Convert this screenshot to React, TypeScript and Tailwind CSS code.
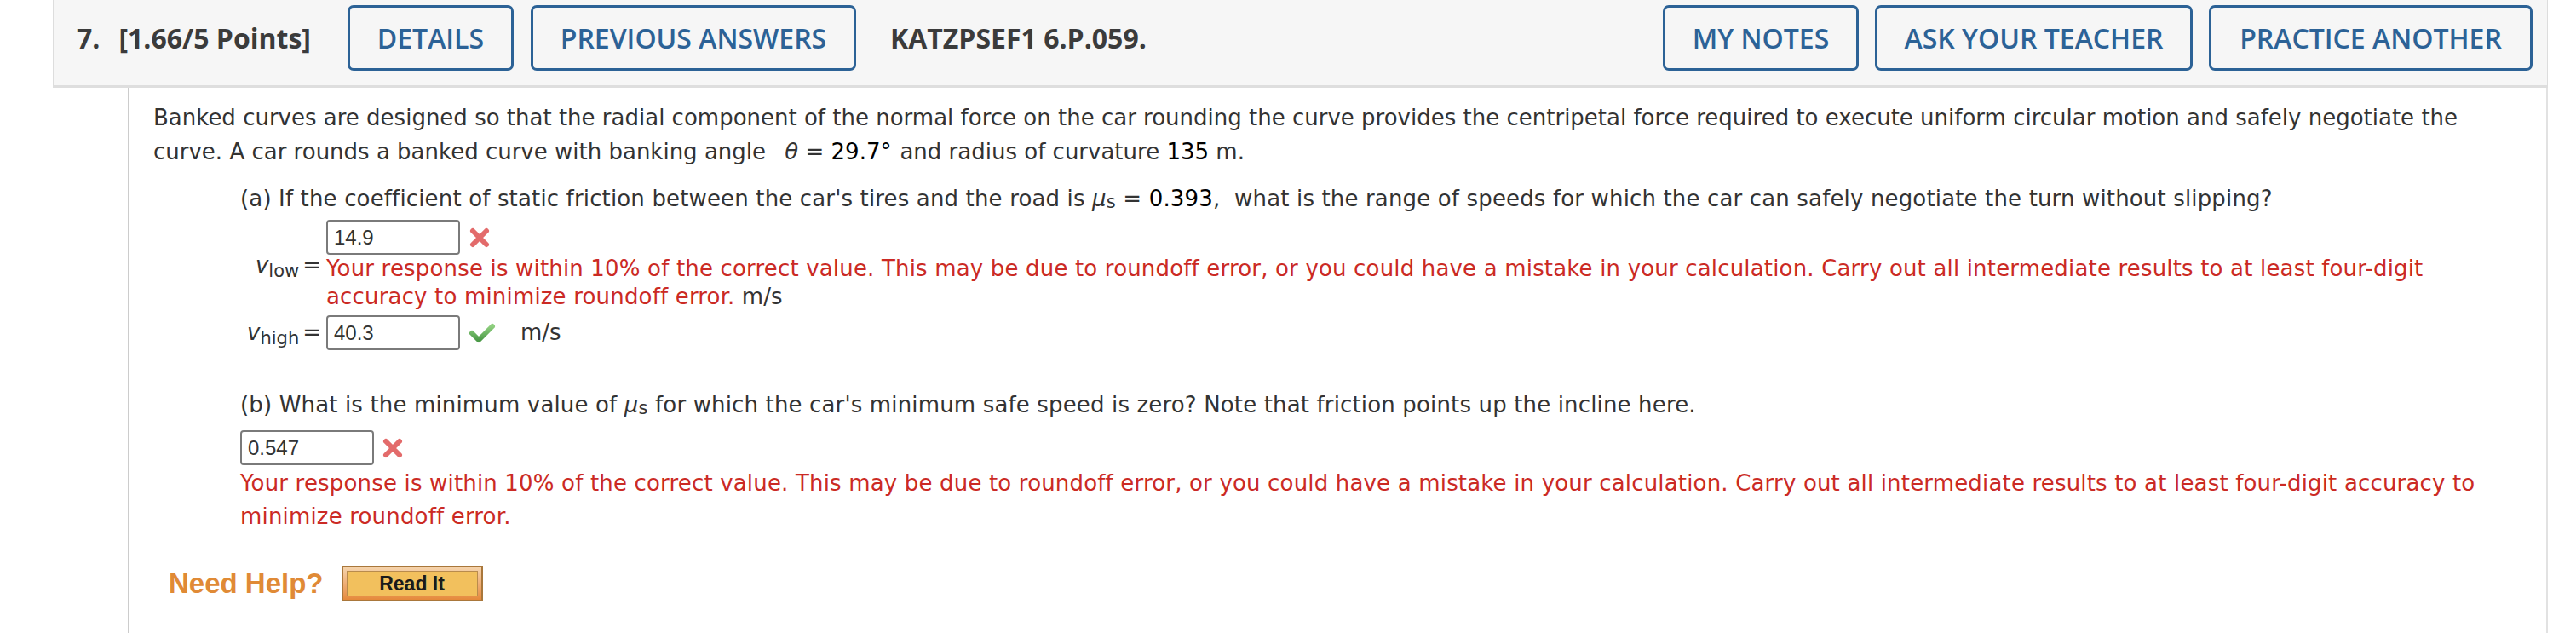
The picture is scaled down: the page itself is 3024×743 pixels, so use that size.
import React from 'react';

const HEAD_FONT = { fontFamily: '"Open Sans", "Liberation Sans", sans-serif' };
const BODY_FONT = { fontFamily: '"DejaVu Sans", Verdana, sans-serif' };
const INPUT_FONT = { fontFamily: '"Liberation Sans", Arial, sans-serif' };

const ERROR_TEXT =
    'Your response is within 10% of the correct value. This may be due to roundoff error, or you could have a mistake in your calculation. Carry out all intermediate results to at least four-digit accuracy to minimize roundoff error.';

function HeaderButton({ label, width }: { label: string; width: string }) {
    return (
        <button
            className={`${width} h-[77px] shrink-0 rounded-[7px] border-[3px] border-[#2c6296] bg-[#f6f6f6] text-[32px] font-semibold text-[#2c6296] flex items-center justify-center`}
            style={HEAD_FONT}
        >
            {label}
        </button>
    );
}

function WrongMark() {
    return (
        <svg width="28" height="26" viewBox="0 0 28 26" className="shrink-0">
            <path d="M6 5 L22 21 M22 5 L6 21" stroke="#e15b5b" strokeWidth="6" strokeLinecap="round" opacity="0.9" />
        </svg>
    );
}

function RightMark() {
    return (
        <svg width="34" height="26" viewBox="0 0 34 26" className="shrink-0">
            <defs>
                <linearGradient id="chk" x1="0" y1="0" x2="0" y2="1">
                    <stop offset="0" stopColor="#8fcf7f" />
                    <stop offset="1" stopColor="#4c9a48" />
                </linearGradient>
            </defs>
            <path d="M5 13 L13 21 L29 5" fill="none" stroke="url(#chk)" strokeWidth="6" strokeLinecap="round" strokeLinejoin="round" />
        </svg>
    );
}

function AnswerBox({ value }: { value: string }) {
    return (
        <input
            readOnly
            value={value}
            className="w-[157px] h-[41px] shrink-0 rounded-[4px] border-2 border-[#7a7a7a] bg-white pl-[7px] text-[24px] text-[#333] outline-none"
            style={INPUT_FONT}
        />
    );
}

function Mu() {
    return (
        <span className="whitespace-nowrap">
            <span className="italic">μ</span>
            <sub className="text-[21px] relative top-[2px]">s</sub>
        </span>
    );
}

function Sym({ v, sub }: { v: string; sub: string }) {
    return (
        <span className="whitespace-nowrap">
            <span className="italic">{v}</span>
            <sub className="text-[21px]">{sub}</sub>
            <span className="ml-[4px]">=</span>
        </span>
    );
}

export default function App() {
    return (
        <div className="min-h-[743px] bg-white" style={BODY_FONT}>
            <div className="ml-[62px] w-[2929px]">
                {/* Question header */}
                <div className="h-[103px] bg-[#f6f6f6] border-x border-[#dddddd] border-b-[3px] border-b-[#dedede] pt-[6px]">
                    <div className="flex items-center h-[77px] pl-[27px] pr-[17px]">
                        <span className="text-[32px] font-bold text-[#3b3b3b] whitespace-nowrap" style={HEAD_FONT}>
                            7.<span className="ml-[22px]">[1.66/5 Points]</span>
                        </span>
                        <div className="flex gap-[20px] ml-[43px]">
                            <HeaderButton label="DETAILS" width="w-[195px]" />
                            <HeaderButton label="PREVIOUS ANSWERS" width="w-[382px]" />
                        </div>
                        <span className="ml-[40px] text-[32px] font-bold text-[#3b3b3b] whitespace-nowrap" style={HEAD_FONT}>
                            KATZPSEF1 6.P.059.
                        </span>
                        <div className="flex gap-[19px] ml-auto">
                            <HeaderButton label="MY NOTES" width="w-[230px]" />
                            <HeaderButton label="ASK YOUR TEACHER" width="w-[373px]" />
                            <HeaderButton label="PRACTICE ANOTHER" width="w-[380px]" />
                        </div>
                    </div>
                </div>

                {/* Question body */}
                <div className="ml-[88px] min-h-[640px] border-l-2 border-l-[#cccccc] border-r-2 border-r-[#e2e2e2] pl-[28px] pr-[30px] pt-[15px] text-[26px] text-[#333]">
                    <p className="leading-[40px]">
                        Banked curves are designed so that the radial component of the normal force on the car rounding the
                        curve provides the centripetal force required to execute uniform circular motion and safely negotiate
                        the curve. A car rounds a banked curve with banking angle{' '}
                        <span className="ml-[14px] italic">θ</span> = <span className="text-black">29.7°</span>
                        <span className="ml-[10px]">and radius of curvature </span>
                        <span className="text-black">135</span> m.
                    </p>

                    {/* Part (a) */}
                    <div className="ml-[102px] mt-[16px]">
                        <p className="leading-[38px] tracking-[0.15px]">
                            (a) If the coefficient of static friction between the car's tires and the road is <Mu /> ={' '}
                            <span className="text-black">0.393</span>,&nbsp; what is the range of speeds for which the car can
                            safely negotiate the turn without slipping?
                        </p>

                        <div className="grid grid-cols-[95px_1fr] gap-x-[6px] gap-y-[5px] mt-[6px] items-center">
                            <div className="justify-self-end leading-[33px]">
                                <Sym v="v" sub="low" />
                            </div>
                            <div>
                                <div className="flex items-center gap-[9px]">
                                    <AnswerBox value="14.9" />
                                    <WrongMark />
                                </div>
                                <p className="leading-[33px]">
                                    <span className="text-[#cb2a24] tracking-[0.17px]">{ERROR_TEXT}</span> m/s
                                </p>
                            </div>

                            <div className="justify-self-end leading-[33px]">
                                <Sym v="v" sub="high" />
                            </div>
                            <div className="flex items-center">
                                <AnswerBox value="40.3" />
                                <span className="ml-[9px]">
                                    <RightMark />
                                </span>
                                <span className="ml-[28px]">m/s</span>
                            </div>
                        </div>
                    </div>

                    {/* Part (b) */}
                    <div className="ml-[102px] mt-[45px]">
                        <p className="leading-[38px] tracking-[0.15px]">
                            (b) What is the minimum value of <Mu /> for which the car's minimum safe speed is zero? Note that
                            friction points up the incline here.
                        </p>
                        <div className="flex items-center gap-[8px] mt-[11px]">
                            <AnswerBox value="0.547" />
                            <WrongMark />
                        </div>
                        <p className="mt-[2px] leading-[39px] text-[#cb2a24] tracking-[0.17px]">{ERROR_TEXT}</p>
                    </div>

                    {/* Help */}
                    <div className="flex items-center mt-[34px] ml-[18px]">
                        <span className="text-[33px] font-bold text-[#e08a36]" style={INPUT_FONT}>
                            Need Help?
                        </span>
                        <button className="ml-[21px] w-[166px] h-[42px] border-2 border-[#a9773b] bg-gradient-to-b from-[#f5d3ab] to-[#e5893a] p-[4px]">
                            <div
                                className="h-full w-full border border-[#b98b4c] bg-[#f2c05d] flex items-center justify-center text-[23px] font-bold text-[#1a1a1a]"
                                style={INPUT_FONT}
                            >
                                Read It
                            </div>
                        </button>
                    </div>
                </div>
            </div>
        </div>
    );
}
